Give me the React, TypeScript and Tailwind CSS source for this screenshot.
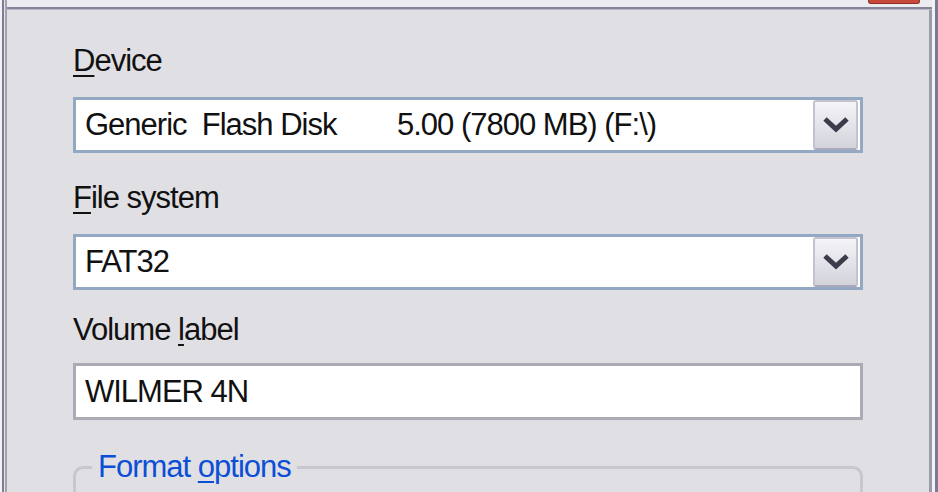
import React from "react";

function Chevron() {
    return (
        <svg width="28" height="18" viewBox="0 0 28 18">
            <polyline points="3,3 14,13 25,3" fill="none" stroke="#3b3b4b" strokeWidth="5" strokeLinejoin="miter" />
        </svg>
    );
}

function Combo({ children }: { children: React.ReactNode }) {
    return (
        <div className="flex h-[56px] w-[790px] items-stretch border-[3px] border-[#93a8c3] bg-white">
            <div className="flex flex-1 items-center pl-[9px] leading-[34px] whitespace-pre">{children}</div>
            <div className="mr-[2px] flex w-[45px] items-center justify-center rounded-[3px] border-2 border-[#c3c3d0] border-b-[#a9a9ba] bg-gradient-to-b from-[#f4f4f8] to-[#d3d3dc]">
                <Chevron />
            </div>
        </div>
    );
}

export default function App() {
    return (
        <div
            className="flex h-[492px] w-[938px] overflow-hidden bg-[#efeff2] text-[31px] tracking-[-1px] text-[#111]"
            style={{ fontFamily: '"Liberation Sans", Arial, sans-serif' }}
        >
            {/* left frame */}
            <div className="w-[2px] shrink-0 bg-[#f3f3f5]" />
            <div className="w-[2px] shrink-0 bg-[#7c7c93]" />
            <div className="w-[1px] shrink-0 bg-[#e6e6ea]" />
            <div className="w-[2px] shrink-0 bg-[#a2a2b2]" />

            {/* main column */}
            <div className="flex w-[925px] shrink-0 flex-col">
                <div className="relative h-[7px] shrink-0 bg-[#ececf0]">
                    <div className="absolute left-[861px] top-0 h-[4px] w-[52px] rounded-b-[3px] border-x border-b border-[#8e2e26] bg-[#c8483c]" />
                </div>
                <div className="h-[2px] shrink-0 bg-[#84859b]" />
                <div className="h-[1px] shrink-0 bg-[#b9b9c6]" />

                <div className="flex flex-1 border-r-[3px] border-[#9a9aab]">
                    <div className="flex flex-1 flex-col bg-[#e0dfe3] pl-[66px] pt-[34px]">
                        <div className="leading-[34px]">
                            <span className="underline decoration-2 underline-offset-[4px]">D</span>evice
                        </div>

                        <div className="mt-[19px]">
                            <Combo>
                                <span className="inline-block w-[312px]">Generic  Flash Disk</span>
                                <span>{"5.00 (7800 MB) (F:\\)"}</span>
                            </Combo>
                        </div>

                        <div className="mt-[28px] leading-[34px]">
                            <span className="underline decoration-2 underline-offset-[4px]">F</span>ile system
                        </div>

                        <div className="mt-[19px]">
                            <Combo>FAT32</Combo>
                        </div>

                        <div className="mt-[23px] leading-[34px]">
                            Volume <span className="underline decoration-2 underline-offset-[4px]">l</span>abel
                        </div>

                        <div className="mt-[16px] flex h-[57px] w-[790px] items-center border-[3px] border-[#ababb5] bg-white pl-[9px] leading-[34px]">
                            WILMER 4N
                        </div>

                        <div className="relative mt-[46px] h-[60px] w-[790px] shrink-0 rounded-[10px] border-[3px] border-[#c7c7cc]">
                            <div className="absolute left-[16px] top-[-19px] bg-[#e0dfe3] px-[6px] leading-[34px] text-[#0b4fd6]">
                                Format <span className="underline decoration-2 underline-offset-[4px]">o</span>ptions
                            </div>
                        </div>
                    </div>
                </div>
            </div>

            {/* right frame */}
            <div className="flex w-[6px] shrink-0">
                <div className="w-[3px] bg-[#f2f2f5]" />
                <div className="w-[3px] bg-[#7a7a92]" />
            </div>
        </div>
    );
}
